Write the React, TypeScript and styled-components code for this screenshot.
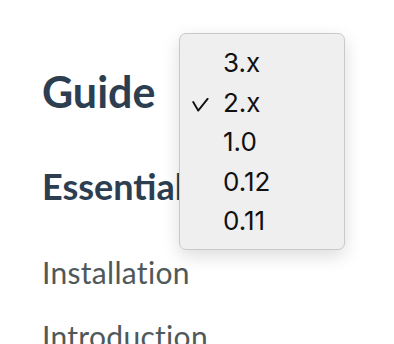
import styled, { createGlobalStyle } from 'styled-components';

const GlobalStyle = createGlobalStyle`
  html, body {
    margin: 0;
    padding: 0;
    background: #ffffff;
  }
  body {
    font-family: Lato, "Open Sans", sans-serif;
    overflow: hidden;
  }
`;

const versions = ['3.x', '2.x', '1.0', '0.12', '0.11'];
const current = '2.x';

const CheckIcon = () => (
  <svg width="17" height="14" viewBox="0 0 17 14" fill="none">
    <path
      d="M1.2 4 L6.2 12.6 L15.6 0.8"
      stroke="#111111"
      strokeWidth="1.9"
      strokeLinecap="round"
      strokeLinejoin="round"
    />
  </svg>
);

const App = () => {
  return (
    <Page>
      <GlobalStyle />
      <Sidebar>
        <Title>Guide</Title>
        <Section>Essentials</Section>
        <NavLink>Installation</NavLink>
        <NavLink>Introduction</NavLink>
      </Sidebar>
      <Menu>
        {versions.map((v) => (
          <MenuItem key={v}>
            <Check>{v === current && <CheckIcon />}</Check>
            <span>{v}</span>
          </MenuItem>
        ))}
      </Menu>
    </Page>
  );
};
export default App;

const Page = styled.div`
  position: relative;
  width: 394px;
  height: 344px;
  overflow: hidden;
`;

const Sidebar = styled.nav`
  display: flex;
  flex-direction: column;
  align-items: flex-start;
  padding: 66px 0 0 42px;
`;

const Title = styled.h1`
  margin: 0;
  font-size: 43px;
  line-height: 52px;
  font-weight: 700;
  color: #2c3e50;
`;

const Section = styled.h2`
  margin: 46px 0 0;
  font-size: 36px;
  line-height: 44px;
  font-weight: 700;
  color: #2c3e50;
`;

const NavLink = styled.a`
  display: block;
  margin-top: 46px;
  font-size: 30px;
  line-height: 36px;
  letter-spacing: 0.3px;
  color: #4f5959;
  & + & {
    margin-top: 28px;
  }
`;

const Menu = styled.ul`
  position: absolute;
  left: 179px;
  top: 33px;
  width: 166px;
  height: 217px;
  margin: 0;
  padding: 9px 0 0;
  list-style: none;
  box-sizing: border-box;
  background: #efefef;
  border: 1px solid #c9c9c9;
  border-radius: 7px;
  box-shadow: 0 6px 18px rgba(0, 0, 0, 0.14);
  font-family: Inter, "Liberation Sans", sans-serif;
`;

const MenuItem = styled.li`
  display: flex;
  align-items: center;
  height: 39.6px;
  font-size: 26px;
  line-height: 39.6px;
  color: #111111;
`;

const Check = styled.span`
  display: flex;
  width: 43px;
  padding: 6px 0 0 12px;
  box-sizing: border-box;
`;
